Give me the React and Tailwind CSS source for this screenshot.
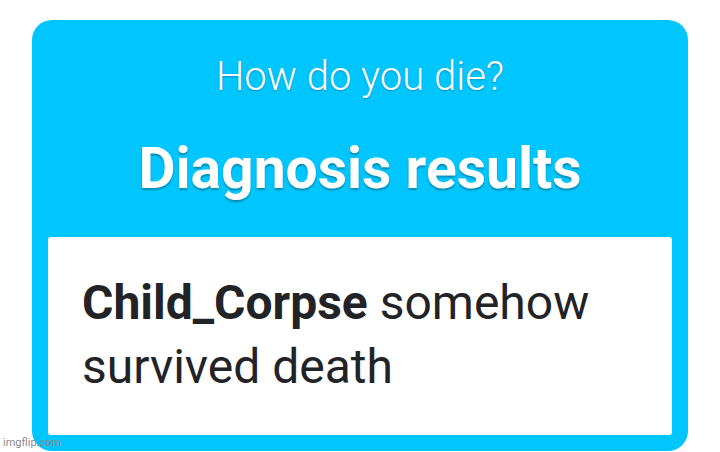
export default function App() {
  return (
    <div className="relative w-[720px] h-[452px] bg-white overflow-hidden" style={{ fontFamily: 'Roboto, "Liberation Sans", sans-serif' }}>
      <div className="absolute left-[32px] top-[20px] w-[656px] h-[431px] bg-[#00c6ff] rounded-[20px] flex flex-col px-4 pb-4">
        <div className="h-[217px] flex flex-col items-center">
          <p className="mt-[37px] text-[40px] font-light text-white leading-none [text-shadow:0_1px_2px_rgba(0,0,0,0.25)]">How do you die?</p>
          <p className="mt-[43px] text-[57px] font-bold text-white leading-none [text-shadow:0_2px_2px_rgba(0,0,0,0.3)]">Diagnosis results</p>
        </div>
        <div className="flex-1 bg-white rounded-[3px] pl-[34px] pr-6 pt-[34px]">
          <p className="text-[48px] leading-[64px] text-[#222326]">
            <span className="font-bold">Child_Corpse</span> somehow survived death
          </p>
        </div>
      </div>
      <span className="absolute left-[3px] bottom-[4px] text-[11px] leading-none text-[#8a8a8a]">imgflip.com</span>
    </div>
  );
}
